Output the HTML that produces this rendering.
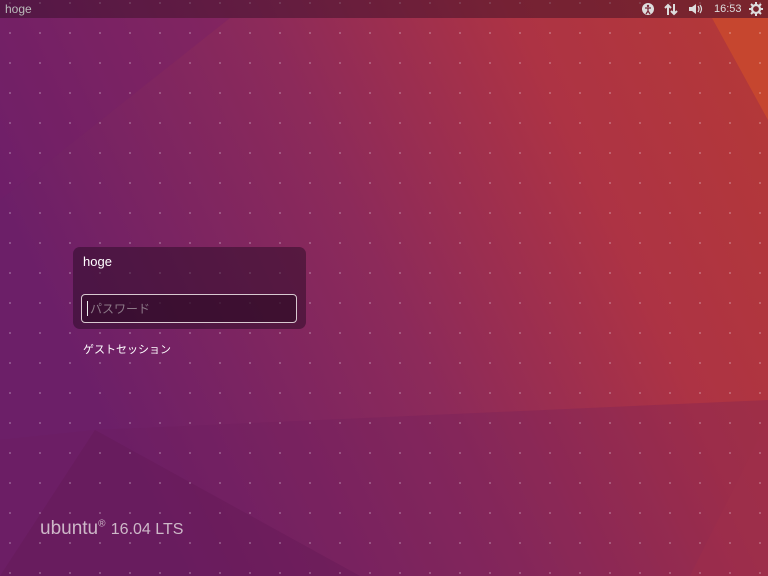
<!DOCTYPE html>
<html><head><meta charset="utf-8"><style>
html,body{margin:0;padding:0;width:768px;height:576px;overflow:hidden;font-family:"Liberation Sans","Noto Sans CJK JP",sans-serif}
#bg{position:absolute;left:0;top:0}
.bar{position:absolute;left:0;top:0;width:768px;height:18px;background:rgba(40,10,30,0.42);color:#ddd;font-size:12px}
.panel{position:absolute;left:73px;top:247px;width:233px;height:82px;border-radius:7px;background:rgba(40,10,35,0.5)}
.user{position:absolute;left:83px;top:254px;color:#fff;font-size:13px}
.pw{position:absolute;left:81px;top:294px;width:216px;height:29px;border:1px solid #d8c8d0;border-radius:4px;background:rgba(40,8,32,0.5);box-sizing:border-box}
.pw span{position:absolute;left:8px;top:5px;font-size:12px;color:#8d7a88}
.pw i{position:absolute;left:5px;top:6px;width:1px;height:15px;background:#eee}
.guest{position:absolute;left:83px;top:341px;color:#fff;font-size:11px}
.logo{position:absolute;left:40px;top:518px;color:#cdb8c8;font-size:19px}
</style></head><body>
<svg id="bg" width="768" height="576">
<defs>
<linearGradient id="g" x1="0" y1="0.35" x2="1" y2="0">
<stop offset="0" stop-color="#6c1f68"/><stop offset="0.4" stop-color="#8c2a5a"/><stop offset="0.7" stop-color="#ad3344"/><stop offset="1" stop-color="#b53936"/>
</linearGradient>
<pattern id="d" x="9" y="32" width="30" height="30" patternUnits="userSpaceOnUse"><rect width="2" height="2" fill="#ffffff" fill-opacity="0.22"/></pattern>
</defs>
<rect width="768" height="576" fill="url(#g)"/>
<polygon points="0,440 95,430 768,400 768,576 0,576" fill="#6a1a5a" fill-opacity="0.25"/>
<polygon points="0,576 95,430 360,576" fill="#641854" fill-opacity="0.4"/>
<polygon points="712,18 768,18 768,120" fill="#c6462f"/>
<polygon points="690,576 768,420 768,576" fill="#a0304a" fill-opacity="0.4"/>
<polygon points="0,18 230,18 0,200" fill="#731f6a" fill-opacity="0.3"/>
<rect width="768" height="576" fill="url(#d)"/>
</svg>
<div class="bar">
<span style="position:absolute;left:5px;top:2px;color:#bbb">hoge</span>
<svg style="position:absolute;left:642px;top:3px" width="12" height="12"><circle cx="6" cy="6" r="6" fill="#ddd"/><circle cx="6" cy="3" r="1.2" fill="#7a2a3a"/><path d="M3 5h6M6 5v3l-2 3M6 8l2 3" stroke="#7a2a3a" stroke-width="1.3" fill="none"/></svg>
<svg style="position:absolute;left:664px;top:3px" width="14" height="13"><path d="M4 12V2M1 5l3-3 3 3M10 1v10M7 8l3 3 3-3" stroke="#ddd" stroke-width="2" fill="none"/></svg>
<svg style="position:absolute;left:688px;top:3px" width="16" height="12"><path d="M1 4h3l4-3v10l-4-3H1z" fill="#ddd"/><path d="M10 3q2 3 0 6M12 2q3 4 0 8" stroke="#ddd" stroke-width="1.2" fill="none"/></svg>
<span style="position:absolute;left:714px;top:3px;font-size:11px;color:#ddd">16:53</span>
<svg style="position:absolute;left:749px;top:2px" width="14" height="14"><circle cx="7" cy="7" r="4" stroke="#ddd" stroke-width="2.2" fill="none"/><path d="M7 0v3M7 11v3M0 7h3M11 7h3M2 2l2 2M10 10l2 2M2 12l2-2M10 4l2-2" stroke="#ddd" stroke-width="2"/></svg>
</div>
<div class="panel"></div>
<div class="user">hoge</div>
<div class="pw"><i></i><span>パスワード</span></div>
<div class="guest">ゲストセッション</div>
<div class="logo">ubuntu<sup style="font-size:10px">®</sup> <span style="font-size:16px">16.04 LTS</span></div>
</body></html>
